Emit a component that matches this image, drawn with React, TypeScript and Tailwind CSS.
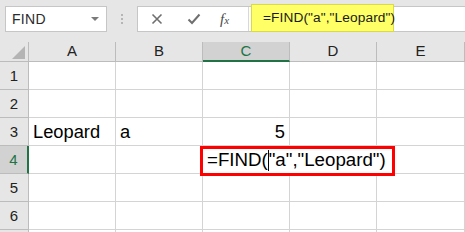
import React from 'react';

const cols = ['A', 'B', 'C', 'D', 'E'];
const rows = [1, 2, 3, 4, 5, 6, 7];

const cellText: Record<string, { text: string; align?: 'left' | 'right' }> = {
  A3: { text: 'Leopard' },
  B3: { text: 'a' },
  C3: { text: '5', align: 'right' },
};

const App: React.FC = () => {
  return (
    <div
      className="w-[465px] h-[232px] overflow-hidden bg-white text-black"
      style={{ fontFamily: '"Liberation Sans", Arial, sans-serif' }}
    >
      {/* formula bar strip */}
      <div className="h-[42px] bg-[#e6e6e6] flex items-start pt-[6px] pl-[5px]">
        <div className="w-[102px] h-[26px] bg-white border border-[#c6c6c6] flex items-center justify-between pl-[6px] pr-[6px]">
          <span className="text-[14px] text-[#2b2b2b] tracking-[0.3px]">FIND</span>
          <span className="w-0 h-0 border-l-[4px] border-r-[4px] border-t-[4px] border-l-transparent border-r-transparent border-t-[#7a7a7a] mr-[1px]" />
        </div>
        <div className="w-[30px] h-[26px] flex flex-col items-center justify-center gap-[2px]">
          <span className="w-[2px] h-[2px] bg-[#b5b5b5]" />
          <span className="w-[2px] h-[2px] bg-[#b5b5b5]" />
          <span className="w-[2px] h-[2px] bg-[#b5b5b5]" />
        </div>
        <div className="flex-1 h-[26px] bg-white border border-[#c6c6c6] border-r-0 flex items-center relative">
          <div className="w-[110px] flex items-center h-full">
            <svg className="ml-[13px]" width="12" height="12" viewBox="0 0 12 12">
              <path d="M1.5 1.5 L10.5 10.5 M10.5 1.5 L1.5 10.5" stroke="#6f6f6f" strokeWidth="1.6" />
            </svg>
            <svg className="ml-[24px]" width="14" height="12" viewBox="0 0 14 12">
              <path d="M1.5 6.5 L5 10 L12.5 1.5" stroke="#6f6f6f" strokeWidth="2" fill="none" />
            </svg>
            <span
              className="ml-[19px] text-[15px] italic text-[#4a4a4a] leading-none"
              style={{ fontFamily: '"Liberation Serif", "Times New Roman", serif' }}
            >
              f<span className="text-[11px]">x</span>
            </span>
          </div>
          <div className="w-[1px] h-full bg-[#d8d8d8]" />
          <div className="absolute left-[113px] top-[-3px] w-[143px] h-[28px] bg-[#ffff66] border border-[#d9d94a] flex items-center pl-[11px]">
            <span className="text-[13.7px] text-[#1a1a1a] tracking-[0.1px]">=FIND("a","Leopard")</span>
          </div>
        </div>
      </div>

      {/* sheet */}
      <div className="relative">
        <div className="grid grid-cols-[29px_87px_87px_87px_87px_88px] grid-rows-[20px_repeat(7,28px)]">
          <div className="bg-[#e6e6e6] border-r border-b border-[#bcbcbc] flex items-end justify-end pr-[3px] pb-[2px]">
            <svg width="13" height="13" viewBox="0 0 13 13">
              <path d="M13 0 L13 13 L0 13 Z" fill="#b4b4b4" />
            </svg>
          </div>
          {cols.map((c) => (
            <div
              key={c}
              className={
                c === 'C'
                  ? 'bg-[#d2d2d2] border-r border-[#bcbcbc] border-b-2 border-b-[#217346] flex items-center justify-center text-[15px] text-[#217346]'
                  : 'bg-[#e6e6e6] border-r border-b border-[#bcbcbc] flex items-center justify-center text-[15px] text-[#222]'
              }
            >
              {c}
            </div>
          ))}
          {rows.map((r) => (
            <React.Fragment key={r}>
              <div
                className={
                  r === 4
                    ? 'bg-[#d2d2d2] border-b border-[#bcbcbc] border-r-2 border-r-[#217346] flex items-center justify-center text-[15px] text-[#217346] pt-[2px]'
                    : 'bg-[#e6e6e6] border-r border-b border-[#bcbcbc] flex items-center justify-center text-[15px] text-[#222] pt-[2px]'
                }
              >
                {r < 7 ? r : ''}
              </div>
              {cols.map((c) => {
                const v = cellText[`${c}${r}`];
                return (
                  <div
                    key={c}
                    className={`border-r border-b border-[#d4d4d4] flex items-end pb-[1px] text-[18.3px] leading-[24px] ${
                      v?.align === 'right' ? 'justify-end pr-[4px]' : 'pl-[4px]'
                    }`}
                  >
                    {v?.text}
                  </div>
                );
              })}
            </React.Fragment>
          ))}
        </div>

        {/* edited cell with overflowing formula */}
        <div className="absolute left-[200px] top-[104px] w-[195px] h-[30px] border-[3px] border-[#ff0000] bg-white flex items-center pl-[4px]">
          <span className="text-[18.7px] leading-none whitespace-nowrap">
            =FIND(<span className="inline-block w-[1px] h-[21px] bg-black align-middle -mt-[3px]" />"a","Leopard")
          </span>
        </div>
      </div>
    </div>
  );
};

export default App;
